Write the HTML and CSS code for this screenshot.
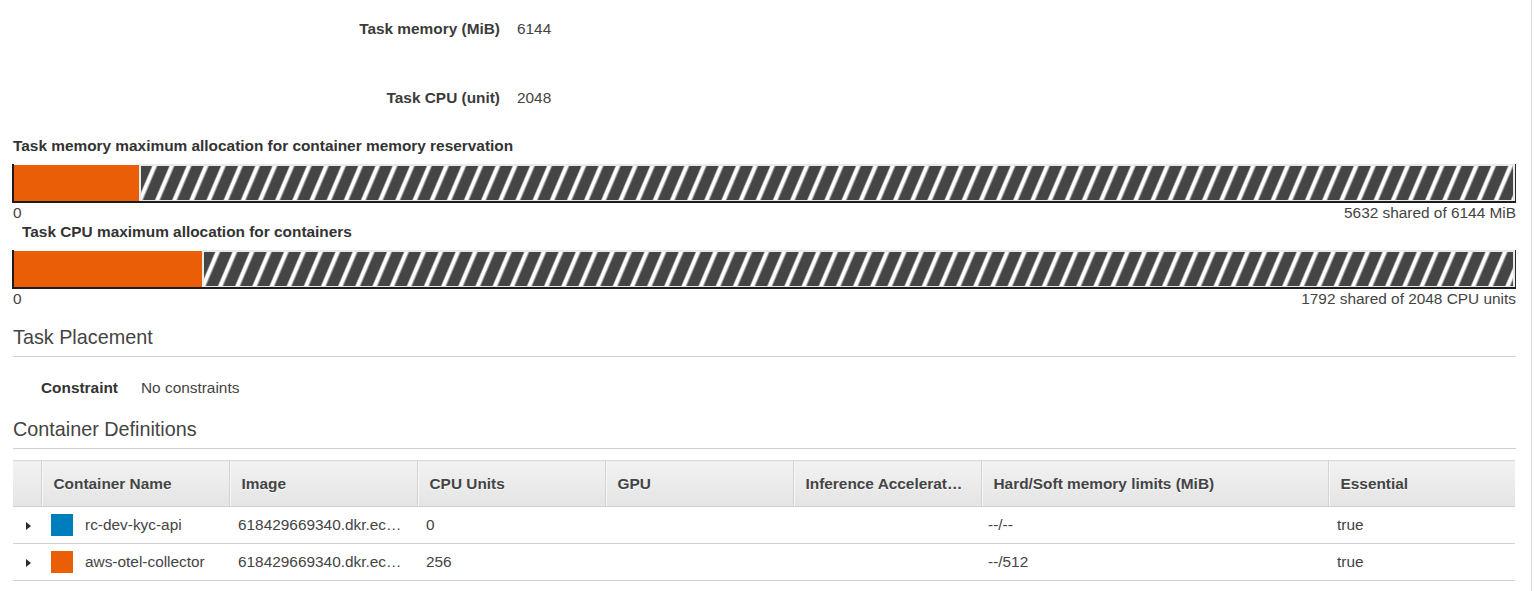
FILE: index.html
```html
<!DOCTYPE html>
<html lang="en">
<head>
<meta charset="utf-8">
<title>Task definition</title>
<link rel="stylesheet" href="styles.css">
</head>
<body>
<div class="page">
  <section class="summary">
    <div class="kv"><div class="kv-label">Task memory (MiB)</div><div class="kv-value">6144</div></div>
    <div class="kv"><div class="kv-label">Task CPU (unit)</div><div class="kv-value">2048</div></div>
  </section>

  <section class="alloc">
    <div class="alloc-title">Task memory maximum allocation for container memory reservation</div>
    <div class="bar"><div class="bar-used" style="width:8.333%"></div><div class="bar-shared"></div></div>
    <div class="bar-scale"><span>0</span><span>5632 shared of 6144 MiB</span></div>
  </section>

  <section class="alloc">
    <div class="alloc-title alloc-title-indent">Task CPU maximum allocation for containers</div>
    <div class="bar"><div class="bar-used" style="width:12.5%"></div><div class="bar-shared"></div></div>
    <div class="bar-scale"><span>0</span><span>1792 shared of 2048 CPU units</span></div>
  </section>

  <h2 class="section-title">Task Placement</h2>
  <div class="constraint"><span class="c-label">Constraint</span><span class="c-value">No constraints</span></div>

  <h2 class="section-title section-title-defs">Container Definitions</h2>
  <table class="defs">
    <colgroup>
      <col class="col-exp"><col class="col-std"><col class="col-std"><col class="col-std"><col class="col-std"><col class="col-std"><col class="col-mem"><col class="col-ess">
    </colgroup>
    <thead>
      <tr>
        <th></th>
        <th>Container Name</th>
        <th>Image</th>
        <th>CPU Units</th>
        <th>GPU</th>
        <th>Inference Accelerators</th>
        <th>Hard/Soft memory limits (MiB)</th>
        <th>Essential</th>
      </tr>
    </thead>
    <tbody>
      <tr>
        <td class="exp"><span class="caret"></span></td>
        <td class="name"><span class="swatch swatch-blue"></span><span>rc-dev-kyc-api</span></td>
        <td>618429669340.dkr.ecr.us-east-1.amazonaws.com/rc-dev-kyc-api:latest</td>
        <td>0</td>
        <td></td>
        <td></td>
        <td class="mem">--/--</td>
        <td>true</td>
      </tr>
      <tr>
        <td class="exp"><span class="caret"></span></td>
        <td class="name"><span class="swatch swatch-orange"></span><span>aws-otel-collector</span></td>
        <td>618429669340.dkr.ecr.us-east-1.amazonaws.com/aws-otel-collector:latest</td>
        <td>256</td>
        <td></td>
        <td></td>
        <td class="mem">--/512</td>
        <td>true</td>
      </tr>
    </tbody>
  </table>
</div>
</body>
</html>
```

FILE: styles.css
```css
html, body {
  margin: 0;
  padding: 0;
  background: #fff;
}

body {
  font-family: "Liberation Sans", Arial, sans-serif;
  font-size: 15.4px;
  color: #444;
}

.page {
  box-sizing: border-box;
  width: 1532px;
  min-height: 591px;
  padding: 19px 15px 0 13px;
  border-right: 1px solid #dcdcdc;
}

/* summary key/values */
.kv {
  display: flex;
  gap: 17px;
  line-height: 20px;
  height: 20px;
}
.kv + .kv {
  margin-top: 49px;
}
.kv-label {
  width: 487px;
  text-align: right;
  font-weight: bold;
  color: #3b3b3b;
}
.kv-value {
  color: #444;
}

/* allocation bars */
.alloc-title {
  font-weight: bold;
  color: #333;
  line-height: 20px;
  margin-top: 28px;
}
.alloc + .alloc .alloc-title {
  margin-top: 0;
}
.alloc-title-indent {
  padding-left: 9px;
}
.bar {
  display: flex;
  height: 37px;
  margin: 8px 0 0 -1px;
  border-left: 2px solid #1c1c1c;
  border-bottom: 2px solid #1c1c1c;
  border-right: 1px solid #2a2a2a;
}
.bar-used {
  background: #eb5e08;
  margin-top: 1px;
}
.bar-shared {
  flex: 1;
  border: 2px solid #e6eaea;
  border-bottom-width: 1px;
  background-color: #454545;
  background-image: repeating-linear-gradient(113deg,
    #454545 0px, #454545 9.6px,
    #ffffff 11.2px, #ffffff 13.6px,
    #454545 15.8px);
}
.bar-scale {
  display: flex;
  justify-content: space-between;
  line-height: 19px;
  color: #444;
}

/* section headings */
.section-title {
  font-size: 19.8px;
  font-weight: normal;
  color: #444;
  line-height: 24px;
  margin: 17px 0 0;
  padding-bottom: 7px;
  border-bottom: 1px solid #cfcfcf;
}
.section-title-defs {
  margin-top: 19px;
}

.constraint {
  display: flex;
  line-height: 20px;
  margin-top: 21px;
  padding-left: 28px;
}
.c-label {
  width: 100px;
  font-weight: bold;
  color: #333;
}

/* table */
.defs {
  width: 1502px;
  margin-top: 11px;
  border-collapse: collapse;
  table-layout: fixed;
  border-top: 1px solid #dcdcdc;
}
.col-exp { width: 28px; }
.col-std { width: 188px; }
.col-mem { width: 347px; }
.col-ess { width: 187px; }

.defs th {
  height: 45px;
  padding: 0 14px 0 12px;
  text-align: left;
  font-weight: bold;
  color: #444;
  text-shadow: 0 1px 0 #fff;
  background: linear-gradient(#f2f2f2, #e4e4e4);
  border-left: 1px solid #d2d2d2;
  box-shadow: inset 1px 0 0 #f8f8f8;
  border-bottom: 1px solid #d0d0d0;
  white-space: nowrap;
  overflow: hidden;
  text-overflow: ellipsis;
}
.defs th:first-child {
  border-left: none;
  box-shadow: none;
}

.defs td {
  height: 36px;
  padding: 0 13px 0 9px;
  border-bottom: 1px solid #d0d0d0;
  color: #444;
  white-space: nowrap;
  overflow: hidden;
  text-overflow: ellipsis;
  vertical-align: middle;
}
.defs td.exp {
  padding: 0;
  text-align: center;
}
.caret {
  display: inline-block;
  width: 0;
  height: 0;
  border-left: 5px solid #2b2b2b;
  border-top: 4px solid transparent;
  border-bottom: 4px solid transparent;
  vertical-align: middle;
  margin-left: 2px;
}
.defs td.name {
  padding-left: 10px;
}
.swatch {
  display: inline-block;
  width: 22px;
  height: 22px;
  margin-right: 12px;
  vertical-align: middle;
}
.swatch + span {
  vertical-align: middle;
}
.swatch-blue { background: #007dbc; }
.swatch-orange { background: #eb5e08; }
.defs td.mem {
  padding-left: 7px;
}
```
